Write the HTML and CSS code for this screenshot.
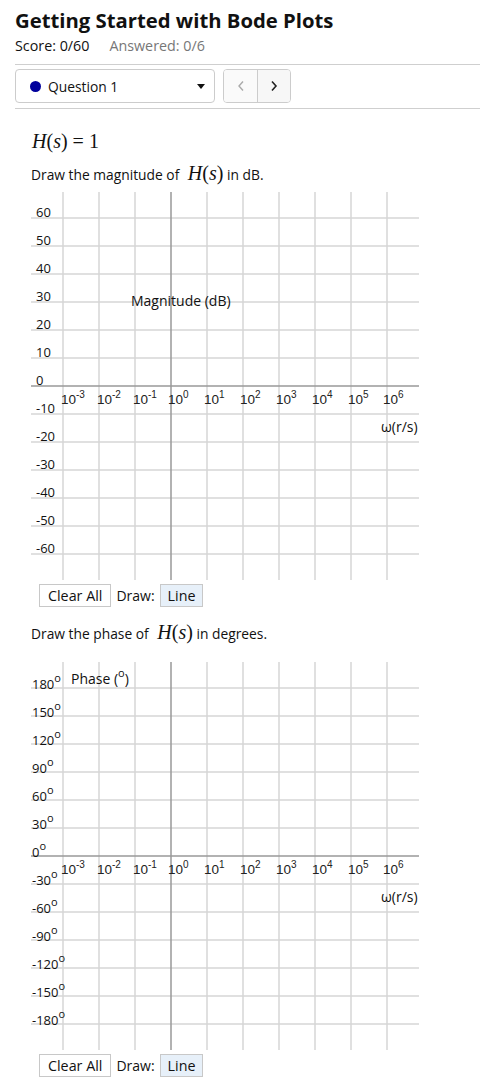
FILE: index.html
```html
<!DOCTYPE html>
<html>
<head>
<meta charset="utf-8">
<title>Getting Started with Bode Plots</title>
<link rel="stylesheet" href="styles.css">
</head>
<body>
<div class="page">
  <h1 class="title">Getting Started with Bode Plots</h1>
  <div class="score"><span>Score: 0/60</span><span class="answered">Answered: 0/6</span></div>
  <hr class="rule">
  <div class="nav">
    <div class="select">
      <span class="dot"></span>
      <span class="qname">Question 1</span>
      <span class="caret"></span>
    </div>
    <div class="btn-group">
      <button class="navbtn disabled" type="button">
        <svg width="10" height="12" viewBox="0 0 10 12"><path d="M7 1.5 L3 6 L7 10.5" fill="none" stroke="#aaa" stroke-width="1.4"/></svg>
      </button>
      <button class="navbtn" type="button">
        <svg width="10" height="12" viewBox="0 0 10 12"><path d="M3 1.5 L7 6 L3 10.5" fill="none" stroke="#222" stroke-width="1.6"/></svg>
      </button>
    </div>
  </div>
  <hr class="rule rule2">

  <div class="question">
    <div class="math display"><i>H</i>(<i>s</i>)<span class="eq">=</span>1</div>
    <p class="prompt">Draw the magnitude of <span class="math inline"><i>H</i>(<i>s</i>)</span> in dB.</p>

    <div class="board board1">
      <svg class="plot" width="388" height="388" viewBox="0 0 388 388">
        <path class="grid" d="M32 0V388M68 0V388M104 0V388M176 0V388M212 0V388M248 0V388M284 0V388M320 0V388M356 0V388M0 26H388M0 54H388M0 82H388M0 110H388M0 138H388M0 166H388M0 222H388M0 250H388M0 278H388M0 306H388M0 334H388M0 362H388"/>
        <path class="axis" d="M0 194H388M140 0V388"/>
        <g class="ylab">
          <text x="5" y="25">60</text>
          <text x="5" y="53">50</text>
          <text x="5" y="81">40</text>
          <text x="5" y="109">30</text>
          <text x="5" y="137">20</text>
          <text x="5" y="165">10</text>
          <text x="5" y="193">0</text>
          <text x="5" y="221">-10</text>
          <text x="5" y="249">-20</text>
          <text x="5" y="277">-30</text>
          <text x="5" y="305">-40</text>
          <text x="5" y="333">-50</text>
          <text x="5" y="361">-60</text>
        </g>
        <g class="xlab">
          <text x="30" y="212">10<tspan class="sup" dy="-6">-3</tspan></text>
          <text x="66" y="212">10<tspan class="sup" dy="-6">-2</tspan></text>
          <text x="102" y="212">10<tspan class="sup" dy="-6">-1</tspan></text>
          <text x="137" y="212">10<tspan class="sup" dy="-6">0</tspan></text>
          <text x="173" y="212">10<tspan class="sup" dy="-6">1</tspan></text>
          <text x="209" y="212">10<tspan class="sup" dy="-6">2</tspan></text>
          <text x="245" y="212">10<tspan class="sup" dy="-6">3</tspan></text>
          <text x="281" y="212">10<tspan class="sup" dy="-6">4</tspan></text>
          <text x="317" y="212">10<tspan class="sup" dy="-6">5</tspan></text>
          <text x="352" y="212">10<tspan class="sup" dy="-6">6</tspan></text>
        </g>
        <text class="alab" x="350" y="240">ω(r/s)</text>
        <text class="tlab" x="100" y="114">Magnitude (dB)</text>
      </svg>
    </div>
    <div class="tools">
      <button class="tbtn" type="button">Clear All</button>
      <span class="draw">Draw:</span>
      <button class="tbtn active" type="button">Line</button>
    </div>

    <p class="prompt prompt2">Draw the phase of <span class="math inline"><i>H</i>(<i>s</i>)</span> in degrees.</p>

    <div class="board board2">
      <svg class="plot" width="388" height="388" viewBox="0 0 388 388">
        <path class="grid" d="M32 0V388M68 0V388M104 0V388M176 0V388M212 0V388M248 0V388M284 0V388M320 0V388M356 0V388M0 26H388M0 54H388M0 82H388M0 110H388M0 138H388M0 166H388M0 222H388M0 250H388M0 278H388M0 306H388M0 334H388M0 362H388"/>
        <path class="axis" d="M0 194H388M140 0V388"/>
        <g class="ylab">
          <text x="1" y="27">180<tspan class="deg" dy="-7">o</tspan></text>
          <text x="1" y="55">150<tspan class="deg" dy="-7">o</tspan></text>
          <text x="1" y="83">120<tspan class="deg" dy="-7">o</tspan></text>
          <text x="1" y="111">90<tspan class="deg" dy="-7">o</tspan></text>
          <text x="1" y="139">60<tspan class="deg" dy="-7">o</tspan></text>
          <text x="1" y="167">30<tspan class="deg" dy="-7">o</tspan></text>
          <text x="1" y="195">0<tspan class="deg" dy="-7">o</tspan></text>
          <text x="1" y="223">-30<tspan class="deg" dy="-7">o</tspan></text>
          <text x="1" y="251">-60<tspan class="deg" dy="-7">o</tspan></text>
          <text x="1" y="279">-90<tspan class="deg" dy="-7">o</tspan></text>
          <text x="1" y="307">-120<tspan class="deg" dy="-7">o</tspan></text>
          <text x="1" y="335">-150<tspan class="deg" dy="-7">o</tspan></text>
          <text x="1" y="363">-180<tspan class="deg" dy="-7">o</tspan></text>
        </g>
        <g class="xlab">
          <text x="30" y="212">10<tspan class="sup" dy="-6">-3</tspan></text>
          <text x="66" y="212">10<tspan class="sup" dy="-6">-2</tspan></text>
          <text x="102" y="212">10<tspan class="sup" dy="-6">-1</tspan></text>
          <text x="137" y="212">10<tspan class="sup" dy="-6">0</tspan></text>
          <text x="173" y="212">10<tspan class="sup" dy="-6">1</tspan></text>
          <text x="209" y="212">10<tspan class="sup" dy="-6">2</tspan></text>
          <text x="245" y="212">10<tspan class="sup" dy="-6">3</tspan></text>
          <text x="281" y="212">10<tspan class="sup" dy="-6">4</tspan></text>
          <text x="317" y="212">10<tspan class="sup" dy="-6">5</tspan></text>
          <text x="352" y="212">10<tspan class="sup" dy="-6">6</tspan></text>
        </g>
        <text class="alab" x="350" y="240">ω(r/s)</text>
        <text class="tlab" x="40" y="22">Phase (<tspan class="deg" dy="-7">o</tspan><tspan dy="7">)</tspan></text>
      </svg>
    </div>
    <div class="tools">
      <button class="tbtn" type="button">Clear All</button>
      <span class="draw">Draw:</span>
      <button class="tbtn active" type="button">Line</button>
    </div>
  </div>
</div>
</body>
</html>
```
FILE: styles.css
```css
html, body {
  margin: 0;
  padding: 0;
  background: #fff;
}
body {
  font-family: "Open Sans", "Noto Sans", sans-serif;
  color: #111;
  font-size: 13.5px;
}
.page {
  padding-left: 15px;
}
.title {
  margin: 0;
  padding-top: 6px;
  font-size: 20.3px;
  font-weight: 700;
  line-height: 28px;
  color: #111;
}
.score {
  display: flex;
  gap: 20px;
  font-size: 14.3px;
  line-height: 18px;
  margin-top: 3px;
  color: #111;
}
.answered {
  color: #777;
}
.rule {
  border: 0;
  border-top: 1px solid #cfcfcf;
  margin: 9px 0 0 0;
  height: 0;
}
.rule2 {
  margin-top: 5px;
}
.nav {
  display: flex;
  gap: 8px;
  margin-top: 4px;
}
.select {
  box-sizing: border-box;
  width: 200px;
  height: 34px;
  border: 1px solid #ccc;
  border-radius: 4px;
  display: flex;
  align-items: center;
  padding-left: 14px;
  padding-right: 9px;
}
.dot {
  width: 11px;
  height: 11px;
  border-radius: 50%;
  background: #00009c;
  margin-right: 7px;
}
.qname {
  flex: 1;
  font-size: 13.8px;
  color: #111;
}
.caret {
  width: 0;
  height: 0;
  border-left: 4px solid transparent;
  border-right: 4px solid transparent;
  border-top: 5px solid #111;
}
.btn-group {
  display: flex;
  box-sizing: border-box;
  height: 34px;
  border: 1px solid #ccc;
  border-radius: 4px;
  overflow: hidden;
}
.navbtn {
  width: 33px;
  height: 32px;
  border: 0;
  padding: 0;
  margin: 0;
  background: #f7f7f7;
  display: flex;
  align-items: center;
  justify-content: center;
}
.navbtn + .navbtn {
  border-left: 1px solid #ccc;
}
.navbtn.disabled {
  background: #fafafa;
}
.question {
  padding-left: 16px;
}
.math {
  font-family: "Liberation Serif", "DejaVu Serif", serif;
}
.math i {
  font-style: italic;
}
.display {
  font-size: 20px;
  line-height: 24px;
  height: 24px;
  margin-top: 20px;
  padding-left: 1px;
}
.eq {
  margin: 0 5px;
}
.prompt {
  margin: 10px 0 0 0;
  height: 22px;
  line-height: 22px;
  font-size: 13.8px;
}
.inline {
  font-size: 20px;
  line-height: 1;
  margin-left: 5px;
}
.board {
  width: 388px;
  height: 388px;
}
.board1 {
  margin-top: 7px;
}
.board2 {
  margin-top: 18px;
}
.plot {
  display: block;
  overflow: visible;
}
.grid {
  fill: none;
  stroke: #d6d6d6;
  stroke-width: 1.5;
}
.axis {
  fill: none;
  stroke: #999;
  stroke-width: 1.5;
}
.ylab text, .alab, .tlab {
  font-family: "Open Sans", "Noto Sans", sans-serif;
  font-size: 13px;
  fill: #111;
}
.alab, .tlab {
  font-size: 14px;
}
.xlab text {
  font-family: "Liberation Sans", Arial, sans-serif;
  font-size: 13.5px;
  fill: #222;
}
.sup {
  font-size: 10px;
}
.deg {
  font-size: 11px;
}
.tools {
  display: flex;
  align-items: center;
  margin-top: 4px;
  margin-left: 8px;
  gap: 5px;
}
.tbtn {
  box-sizing: border-box;
  height: 23px;
  border: 1px solid #c8c8c8;
  background: #fff;
  font-family: "Open Sans", "Noto Sans", sans-serif;
  font-size: 14.3px;
  color: #111;
  padding: 0 8px;
  margin: 0;
  border-radius: 0;
}
.tbtn.active {
  background: #e7f0f9;
  padding: 0 7px;
}
.draw {
  font-size: 14px;
}
.prompt2 {
  margin-top: 15px;
}
```
